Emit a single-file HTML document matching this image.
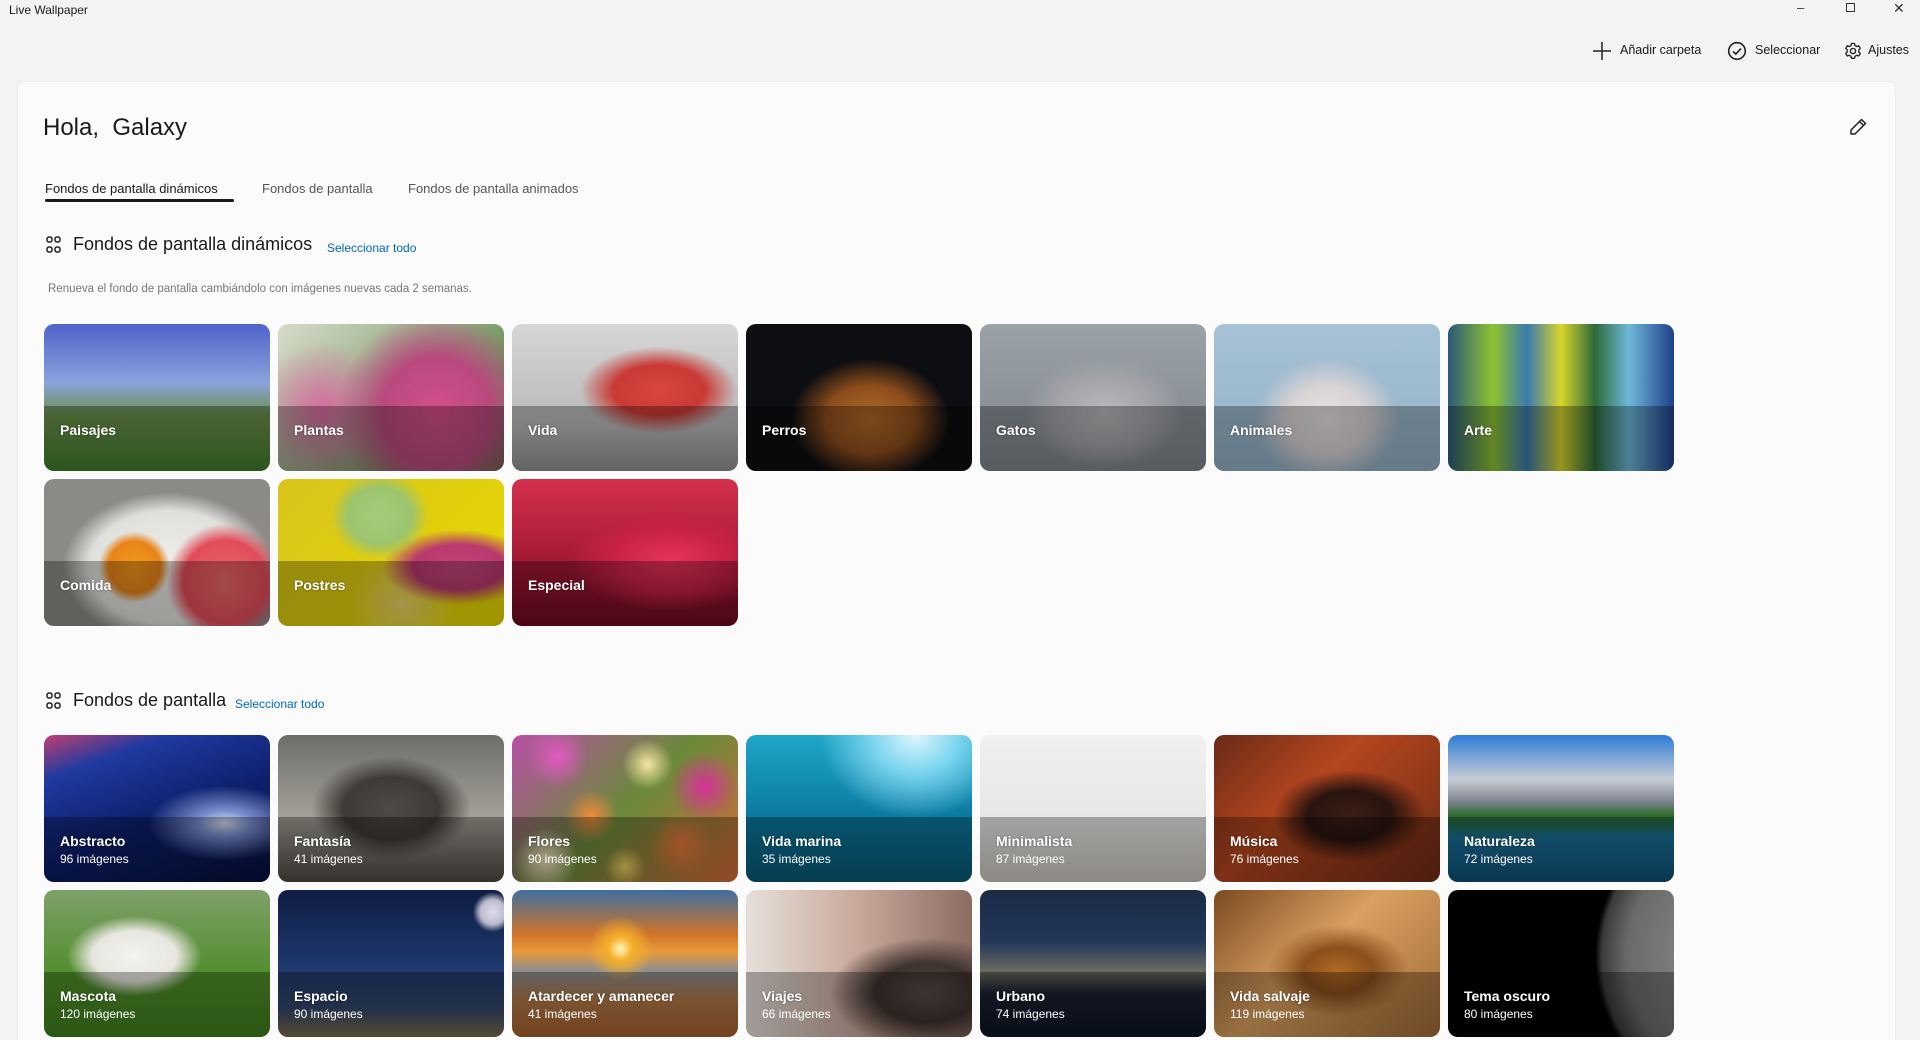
<!DOCTYPE html>
<html style="overflow:hidden;height:1040px"><head><meta charset="utf-8"><style>
*{margin:0;padding:0;box-sizing:border-box}
body{width:1920px;height:1040px;background:#f3f3f3;font-family:"Liberation Sans",sans-serif;position:relative;overflow:hidden;color:#1a1a1a}
.abs{position:absolute}
.panel{position:absolute;left:17px;top:81px;width:1879px;height:959px;background:#fbfbfb;border-radius:8px 8px 0 0;border:1px solid #ececec;border-bottom:none}
.card{position:absolute;width:226px;height:147px;border-radius:10px;overflow:hidden}
.card:after{content:"";position:absolute;left:0;right:0;top:82px;bottom:0;background:rgba(0,0,0,.3)}
.card .n{position:absolute;left:16px;top:98px;color:#fff;font-size:14px;font-weight:bold;z-index:2;text-shadow:0 0 2px rgba(0,0,0,.4)}
.card .c{position:absolute;left:16px;top:117px;color:#fff;font-size:12px;z-index:2}
.tb{position:absolute;top:43px;font-size:12.5px;color:#1a1a1a}
</style></head><body>
<div class="abs" style="left:9px;top:3px;font-size:12px">Live Wallpaper</div>
<div class="abs" style="left:1797px;top:0;font-size:13px;color:#333">&#8211;</div>
<div class="abs" style="left:1846px;top:3px;width:9px;height:9px;border:1px solid #333"></div>
<div class="abs" style="left:1893px;top:0px;font-size:14px;color:#333">✕</div>

<svg class="abs" style="left:1592px;top:41px" width="20" height="20" viewBox="0 0 20 20"><path d="M10 1v18M1 10h18" stroke="#222" stroke-width="1.5"/></svg>
<div class="tb" style="left:1620px">Añadir carpeta</div>
<svg class="abs" style="left:1727px;top:41px" width="20" height="20" viewBox="0 0 20 20"><circle cx="10" cy="10" r="8.3" fill="none" stroke="#222" stroke-width="1.6"/><path d="M6 10.3l2.8 2.8 5.2-5.6" fill="none" stroke="#222" stroke-width="1.6"/></svg>
<div class="tb" style="left:1755px">Seleccionar</div>
<svg class="abs" style="left:1844px;top:42px" width="18" height="18" viewBox="0 0 18 18"><circle cx="9" cy="9" r="2.6" fill="none" stroke="#222" stroke-width="1.4"/><path d="M7.5 1.5h3l.5 2 1.8 1 2-.7 1.5 2.6-1.5 1.4v2.2l1.5 1.4-1.5 2.6-2-.7-1.8 1-.5 2h-3l-.5-2-1.8-1-2 .7-1.5-2.6 1.5-1.4V7.8L1.7 6.4l1.5-2.6 2 .7 1.8-1z" fill="none" stroke="#222" stroke-width="1.3" stroke-linejoin="round"/></svg>
<div class="tb" style="left:1868px">Ajustes</div>

<div class="panel"></div>
<div class="abs" style="left:43px;top:114px;font-size:24px">Hola,&nbsp; Galaxy</div>
<svg class="abs" style="left:1848px;top:117px" width="20" height="20" viewBox="0 0 20 20"><path d="M13.5 2.5l4 4L7 17H3v-4z M11.5 4.5l4 4" fill="none" stroke="#222" stroke-width="1.5" stroke-linejoin="round"/></svg>

<div class="abs" style="left:45px;top:181px;font-size:13px;color:#1a1a1a">Fondos de pantalla dinámicos</div>
<div class="abs" style="left:45px;top:199px;width:189px;height:3px;background:#1a1a1a;border-radius:2px"></div>
<div class="abs" style="left:262px;top:181px;font-size:13px;color:#555">Fondos de pantalla</div>
<div class="abs" style="left:408px;top:181px;font-size:13px;color:#555">Fondos de pantalla animados</div>

<svg class="abs" style="left:46px;top:236px" width="16" height="18" viewBox="0 0 16 18"><g fill="none" stroke="#222" stroke-width="1.5"><rect x="1" y="1" width="5" height="5" rx="2"/><rect x="9" y="1" width="5" height="5" rx="2"/><rect x="1" y="11" width="5" height="5" rx="2"/><rect x="9" y="11" width="5" height="5" rx="2"/></g></svg>
<div class="abs" style="left:73px;top:234px;font-size:18px">Fondos de pantalla dinámicos</div>
<div class="abs" style="left:327px;top:241px;font-size:12px;color:#0067c0">Seleccionar todo</div>
<div class="abs" style="left:48px;top:283px;font-size:11.5px;color:#777">Renueva el fondo de pantalla cambiándolo con imágenes nuevas cada 2 semanas.</div>

<div class="card" style="left:44px;top:324px;background:linear-gradient(180deg,#4f63c9 0%,#8aa3dc 40%,#6a8f4a 62%,#3f7a2a 100%)"><div class="n">Paisajes</div></div>
<div class="card" style="left:278px;top:324px;background:radial-gradient(circle at 70% 60%,#d44f8c 0,#b9497e 30%,transparent 55%),radial-gradient(circle at 20% 60%,#d86aa0 0,transparent 35%),linear-gradient(135deg,#d9dccb,#7e9e6e 60%,#4e6b3e)"><div class="n">Plantas</div></div>
<div class="card" style="left:512px;top:324px;background:radial-gradient(ellipse at 65% 45%,#d9463f 0,#c93a35 22%,transparent 38%),linear-gradient(180deg,#d6d6d6,#b8b8b8 70%,#8f8f8f)"><div class="n">Vida</div></div>
<div class="card" style="left:746px;top:324px;background:radial-gradient(ellipse at 55% 65%,#b0692a 0,#8d4d1c 25%,transparent 45%),#0d0e11"><div class="n">Perros</div></div>
<div class="card" style="left:980px;top:324px;background:radial-gradient(ellipse at 55% 60%,#b9b9bd 0,#a3a3a8 28%,transparent 45%),linear-gradient(180deg,#9aa2a8,#7e858b)"><div class="n">Gatos</div></div>
<div class="card" style="left:1214px;top:324px;background:radial-gradient(ellipse at 50% 65%,#e7e2e2 0,#d8d3d5 25%,transparent 45%),linear-gradient(180deg,#a7c2d6,#93b0c4)"><div class="n">Animales</div></div>
<div class="card" style="left:1448px;top:324px;background:linear-gradient(90deg,#2a5a7a,#8ec230 20%,#3a7ab0 35%,#d7d52a 50%,#2c6a3a 65%,#6fb8d9 80%,#1e3f8a)"><div class="n">Arte</div></div>

<div class="card" style="left:44px;top:479px;background:radial-gradient(circle at 40% 60%,#f39a1a 0,#e8841a 16%,transparent 22%),radial-gradient(circle at 80% 70%,#e96a6a 0,#e24c5a 20%,transparent 28%),radial-gradient(ellipse at 55% 60%,#eeeeea 0,#e0e0dc 45%,transparent 60%),#8b8a86"><div class="n">Comida</div></div>
<div class="card" style="left:278px;top:479px;background:radial-gradient(ellipse at 45% 25%,#a6cc7a 0,#9cc46e 18%,transparent 28%),radial-gradient(ellipse at 80% 60%,#c4457a 0,#b8396d 18%,transparent 30%),radial-gradient(ellipse at 55% 85%,#e9d36a 0,transparent 30%),linear-gradient(135deg,#d8c41c,#e8d800)"><div class="n">Postres</div></div>
<div class="card" style="left:512px;top:479px;background:radial-gradient(ellipse at 70% 55%,#e8345a 0,#c92246 25%,transparent 45%),linear-gradient(180deg,#d4304d,#a01734 60%,#6c0a1e)"><div class="n">Especial</div></div>

<svg class="abs" style="left:46px;top:692px" width="16" height="18" viewBox="0 0 16 18"><g fill="none" stroke="#222" stroke-width="1.5"><rect x="1" y="1" width="5" height="5" rx="2"/><rect x="9" y="1" width="5" height="5" rx="2"/><rect x="1" y="11" width="5" height="5" rx="2"/><rect x="9" y="11" width="5" height="5" rx="2"/></g></svg>
<div class="abs" style="left:73px;top:690px;font-size:18px">Fondos de pantalla</div>
<div class="abs" style="left:235px;top:697px;font-size:12px;color:#0067c0">Seleccionar todo</div>

<div class="card" style="left:44px;top:735px;background:radial-gradient(ellipse at 80% 60%,#d6e0f0 0,#7b8fd0 10%,transparent 30%),linear-gradient(160deg,#c04070 0,#1f3aa0 20%,#0d1f6a 55%,#06103a)"><div class="n">Abstracto</div><div class="c">96 imágenes</div></div>
<div class="card" style="left:278px;top:735px;background:radial-gradient(ellipse at 50% 50%,#4e4a44 0,#3e3a36 30%,transparent 50%),linear-gradient(180deg,#6d6d6b,#a3a096 55%,#4c4842)"><div class="n">Fantasía</div><div class="c">41 imágenes</div></div>
<div class="card" style="left:512px;top:735px;background:radial-gradient(circle at 20% 15%,#e05ac0 0,transparent 14%),radial-gradient(circle at 60% 20%,#f4e6a0 0,transparent 14%),radial-gradient(circle at 85% 35%,#d6309a 0,transparent 16%),radial-gradient(circle at 35% 55%,#f08a3a 0,transparent 16%),radial-gradient(circle at 75% 75%,#e9773a 0,transparent 16%),radial-gradient(circle at 15% 85%,#f2e4c0 0,transparent 14%),radial-gradient(circle at 50% 90%,#e8d060 0,transparent 12%),linear-gradient(135deg,#b94fa8,#6a8a3a 50%,#d86a3a)"><div class="n">Flores</div><div class="c">90 imágenes</div></div>
<div class="card" style="left:746px;top:735px;background:radial-gradient(ellipse at 75% 0%,#dff6ff 0,#7cd5ef 18%,transparent 40%),linear-gradient(180deg,#1ea6c8,#0b7aa1 55%,#0a5773)"><div class="n">Vida marina</div><div class="c">35 imágenes</div></div>
<div class="card" style="left:980px;top:735px;background:linear-gradient(180deg,#f0f0ef,#e6e6e4 60%,#c9c5bd)"><div class="n">Minimalista</div><div class="c">87 imágenes</div></div>
<div class="card" style="left:1214px;top:735px;background:radial-gradient(ellipse at 60% 55%,#3a1e16 0,#2a140e 22%,transparent 40%),linear-gradient(135deg,#6a2a18,#b5461e 40%,#6d2b15)"><div class="n">Música</div><div class="c">76 imágenes</div></div>
<div class="card" style="left:1448px;top:735px;background:linear-gradient(180deg,#2d7cd8 0,#c8ccd5 30%,#7d8590 45%,#2c6a2a 55%,#1a6e95 70%,#0f4f78)"><div class="n">Naturaleza</div><div class="c">72 imágenes</div></div>

<div class="card" style="left:44px;top:890px;background:radial-gradient(ellipse at 40% 45%,#f4f2ee 0,#e8e6e0 22%,transparent 35%),linear-gradient(180deg,#7fa06a,#4f8d2a 60%,#3f7e1e)"><div class="n">Mascota</div><div class="c">120 imágenes</div></div>
<div class="card" style="left:278px;top:890px;background:radial-gradient(circle at 95% 15%,#dde 0,#bbc 5%,transparent 8%),linear-gradient(180deg,#0f1d45,#1f3a6e 55%,#33456a 80%,#7a6a4a)"><div class="n">Espacio</div><div class="c">90 imágenes</div></div>
<div class="card" style="left:512px;top:890px;background:radial-gradient(circle at 48% 40%,#fff7c0 0,#f5b02c 8%,transparent 22%),linear-gradient(180deg,#3f6fa0 0,#d0742a 30%,#e79a3a 42%,#8c8e90 55%,#b07848 75%,#a65f2a)"><div class="n">Atardecer y amanecer</div><div class="c">41 imágenes</div></div>
<div class="card" style="left:746px;top:890px;background:radial-gradient(ellipse at 80% 70%,#5a4a44 0,#3e322e 20%,transparent 38%),linear-gradient(90deg,#e6e0da,#c8a89a 50%,#8a6c62)"><div class="n">Viajes</div><div class="c">66 imágenes</div></div>
<div class="card" style="left:980px;top:890px;background:linear-gradient(180deg,#1c2a44,#22375a 35%,#6a6a60 55%,#1a2233 70%,#0d1422)"><div class="n">Urbano</div><div class="c">74 imágenes</div></div>
<div class="card" style="left:1214px;top:890px;background:radial-gradient(ellipse at 55% 55%,#b26a22 0,#8a4f1c 20%,transparent 40%),linear-gradient(135deg,#7a4a22,#d9a060 45%,#a06a34)"><div class="n">Vida salvaje</div><div class="c">119 imágenes</div></div>
<div class="card" style="left:1448px;top:890px;background:radial-gradient(circle at 135% 45%,#9a9a9a 0,#6a6a6a 40%,#3a3a3a 48%,#000 50%)"><div class="n">Tema oscuro</div><div class="c">80 imágenes</div></div>
</body></html>
